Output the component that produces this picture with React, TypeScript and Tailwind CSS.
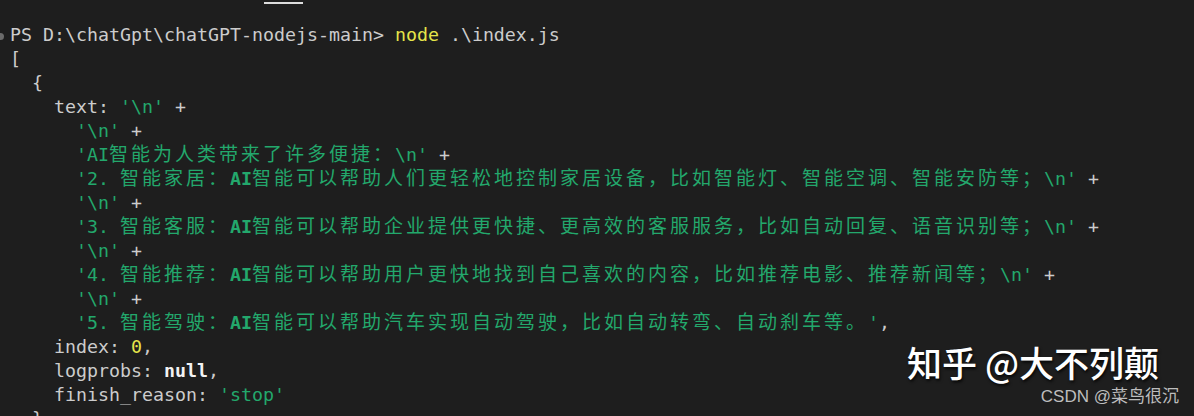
import React from "react";

type Seg = { t: string; c?: string };

const G = "text-[#23a86c]";
const Y = "text-[#e5e54a]";
const CJK = /[\u3000-\u303f\u4e00-\u9fff\uff00-\uffef]/;

// splits a run into ascii and CJK pieces, CJK pieces take two cells
function Run({ t, c }: Seg) {
  const parts = t.split(/([\u3000-\u303f\u4e00-\u9fff\uff00-\uffef]+)/).filter(Boolean);
  return (
    <span className={c}>
      {parts.map((p, i) =>
        CJK.test(p) ? (
          <span
            key={i}
            className="font-['Noto_Sans_CJK_SC',sans-serif] text-[19px] leading-none tracking-[3px]"
          >
            {p}
          </span>
        ) : p === "AI" ? (
          <span key={i} className="font-bold">
            {p}
          </span>
        ) : (
          <span key={i}>{p}</span>
        )
      )}
    </span>
  );
}

function Line({ segs }: { segs: Seg[] }) {
  return (
    <div className="h-[24px] whitespace-pre leading-[24px]">
      {segs.map((s, i) => (
        <Run key={i} t={s.t} c={s.c} />
      ))}
    </div>
  );
}

const lines: Seg[][] = [
  [{ t: "PS D:\\chatGpt\\chatGPT-nodejs-main> " }, { t: "node", c: Y }, { t: " .\\index.js" }],
  [{ t: "[" }],
  [{ t: "  {" }],
  [{ t: "    text: " }, { t: "'\\n'", c: G }, { t: " +" }],
  [{ t: "      " }, { t: "'\\n'", c: G }, { t: " +" }],
  [{ t: "      " }, { t: "'AI智能为人类带来了许多便捷：\\n'", c: G }, { t: " +" }],
  [
    { t: "      " },
    { t: "'2. 智能家居：AI智能可以帮助人们更轻松地控制家居设备，比如智能灯、智能空调、智能安防等；\\n'", c: G },
    { t: " +" },
  ],
  [{ t: "      " }, { t: "'\\n'", c: G }, { t: " +" }],
  [
    { t: "      " },
    { t: "'3. 智能客服：AI智能可以帮助企业提供更快捷、更高效的客服服务，比如自动回复、语音识别等；\\n'", c: G },
    { t: " +" },
  ],
  [{ t: "      " }, { t: "'\\n'", c: G }, { t: " +" }],
  [
    { t: "      " },
    { t: "'4. 智能推荐：AI智能可以帮助用户更快地找到自己喜欢的内容，比如推荐电影、推荐新闻等；\\n'", c: G },
    { t: " +" },
  ],
  [{ t: "      " }, { t: "'\\n'", c: G }, { t: " +" }],
  [
    { t: "      " },
    { t: "'5. 智能驾驶：AI智能可以帮助汽车实现自动驾驶，比如自动转弯、自动刹车等。'", c: G },
    { t: "," },
  ],
  [{ t: "    index: " }, { t: "0", c: Y }, { t: "," }],
  [{ t: "    logprobs: " }, { t: "null", c: "font-bold text-[#f2f2f2]" }, { t: "," }],
  [{ t: "    finish_reason: " }, { t: "'stop'", c: G }],
  [{ t: "  }" }],
];

export default function App() {
  return (
    <div className="relative h-[416px] w-[1194px] overflow-hidden bg-[#1e1e1e]">
      <div className="ml-[264px] mt-[2px] h-[2px] w-[39px] bg-[#dddddd]" />

      <div className="flex pt-[19px]">
        <div className="flex w-[10px] flex-col">
          <div className="ml-[-3px] mt-[10px] h-[7px] w-[7px] rounded-full bg-[#6b6b6b]" />
        </div>
        <div className="font-['DejaVu_Sans_Mono',monospace] text-[18.27px] text-[#cccccc]">
          {lines.map((l, i) => (
            <Line key={i} segs={l} />
          ))}
        </div>
      </div>

      <div className="absolute left-[907px] top-[340px] font-['Noto_Sans_CJK_SC',sans-serif] text-[35px] font-medium leading-[44px] text-white [text-shadow:1px_2px_3px_rgba(0,0,0,0.8)]">
        知乎 @大不列颠
      </div>
      <div className="absolute right-[15px] top-[385px] font-['Liberation_Sans','Noto_Sans_CJK_SC',sans-serif] text-[17px] leading-[24px] text-[#bdbdbd]">
        CSDN @菜鸟很沉
      </div>
    </div>
  );
}
